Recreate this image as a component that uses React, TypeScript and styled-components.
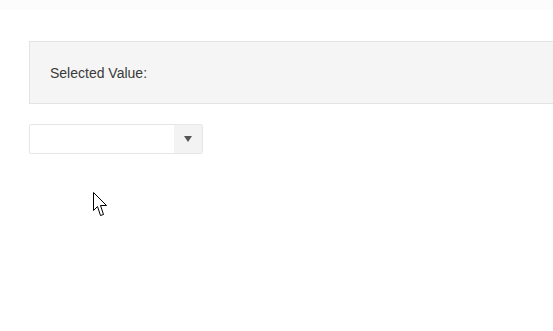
import React from "react";
import styled, { createGlobalStyle } from "styled-components";

const GlobalStyle = createGlobalStyle`
  html, body {
    margin: 0;
    padding: 0;
    background: #ffffff;
    font-family: "Liberation Sans", Arial, sans-serif;
  }
`;

const Page = styled.div`
  position: relative;
  width: 553px;
  height: 331px;
  overflow: hidden;
  background: #ffffff;
`;

const TopStrip = styled.div`
  height: 10px;
  background: #fcfcfc;
`;

const Content = styled.div`
  display: flex;
  flex-direction: column;
  align-items: flex-start;
  gap: 20px;
  padding: 31px 0 0 29px;
`;

const Well = styled.div`
  box-sizing: border-box;
  width: 560px;
  height: 63px;
  display: flex;
  align-items: center;
  padding: 0 0 0 20px;
  background: #f5f5f5;
  border: 1px solid #e3e3e3;
  color: #3a3a3a;
  font-size: 14px;
`;

const Select = styled.div`
  box-sizing: border-box;
  width: 174px;
  height: 30px;
  display: flex;
  border: 1px solid #e6e6e6;
  border-radius: 2px;
  background: #ffffff;
  overflow: hidden;
`;

const SelectValue = styled.div`
  flex: 1;
`;

const SelectButton = styled.div`
  width: 28px;
  display: flex;
  align-items: center;
  justify-content: center;
  background: #f3f3f3;
`;

const Arrow = styled.span`
  width: 0;
  height: 0;
  border-left: 4px solid transparent;
  border-right: 4px solid transparent;
  border-top: 6px solid #555555;
`;

const Cursor = styled.svg`
  position: absolute;
  left: 92px;
  top: 191px;
`;

export default function App() {
  return (
    <Page>
      <GlobalStyle />
      <TopStrip />
      <Content>
        <Well>Selected Value:</Well>
        <Select>
          <SelectValue />
          <SelectButton>
            <Arrow />
          </SelectButton>
        </Select>
      </Content>
      <Cursor width="18" height="28" viewBox="0 0 18 28">
        <path
          d="M1.5 1.5 L1.5 19.5 L5.5 15.5 L8.5 24.5 L11.5 23.5 L8.5 14.5 L14.5 14.5 Z"
          fill="#ffffff"
          stroke="#000000"
          strokeWidth="1"
          strokeLinejoin="miter"
        />
      </Cursor>
    </Page>
  );
}
